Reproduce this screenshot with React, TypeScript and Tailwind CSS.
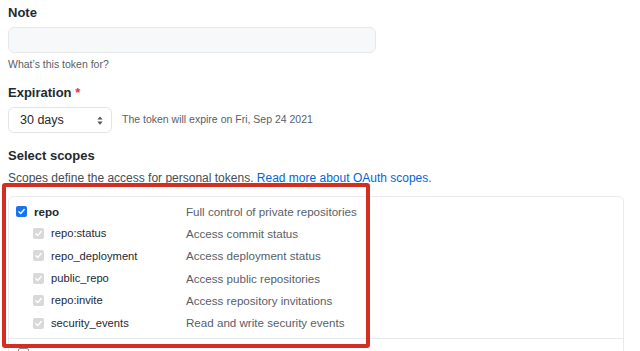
const scopes = [
  { name: "repo:status", desc: "Access commit status" },
  { name: "repo_deployment", desc: "Access deployment status" },
  { name: "public_repo", desc: "Access public repositories" },
  { name: "repo:invite", desc: "Access repository invitations" },
  { name: "security_events", desc: "Read and write security events" },
];

function Check({ disabled }: { disabled?: boolean }) {
  return (
    <span
      className={
        disabled
          ? "flex h-[11px] w-[11px] items-center justify-center rounded-[2px] bg-[#d9d9d9]"
          : "flex h-[11px] w-[11px] items-center justify-center rounded-[2px] bg-[#1a73e8]"
      }
    >
      <svg viewBox="0 0 12 12" className="h-[9px] w-[9px]" fill="none">
        <path d="M2.5 6.2 5 8.6 9.6 3.4" stroke="white" strokeWidth="1.8" strokeLinecap="round" strokeLinejoin="round" />
      </svg>
    </span>
  );
}

export default function App() {
  return (
    <div className="relative h-[351px] w-[640px] overflow-hidden bg-white px-2 pt-[5px] font-['Liberation_Sans',Arial,sans-serif] text-[#24292f]">
      <div className="h-4 text-[13px] font-bold leading-4">Note</div>
      <div className="mt-[6px] h-[26px] w-[368px] rounded-md border border-[#e6e8eb] bg-[#f6f8fa]" />
      <div className="mt-[3px] h-4 text-[10.5px] leading-4 text-[#586069]">What’s this token for?</div>

      <div className="mt-[13px] h-4 text-[13px] font-bold leading-4">
        Expiration <span className="text-[#d73a49]">*</span>
      </div>
      <div className="mt-[6px] flex h-[26px] items-center">
        <div className="flex h-[26px] w-[104px] items-center justify-between rounded-md border border-[#e1e4e8] bg-white pl-[11px] pr-[8px] text-[12.5px]">
          <span>30 days</span>
          <svg viewBox="0 0 8 12" className="h-[9px] w-[6px]" fill="#555">
            <path d="M4 0.5 7.5 4.8H0.5Z" />
            <path d="M4 11.5 7.5 7.2H0.5Z" />
          </svg>
        </div>
        <span className="ml-[10px] text-[10.5px] text-[#586069]">The token will expire on Fri, Sep 24 2021</span>
      </div>

      <div className="mt-[15px] h-4 text-[13px] font-bold leading-4">Select scopes</div>
      <div className="mt-[6px] h-4 text-[12px] leading-4 text-[#444d56]">
        Scopes define the access for personal tokens.{" "}
        <span className="text-[#0366d6]">Read more about OAuth scopes.</span>
      </div>

      <div className="mt-[10px] w-[616px] rounded-md border border-[#e8eaed]">
        <div className="border-b border-[#e8eaed] pb-[3.5px] pt-[3px]">
          <div className="flex h-[22.4px] items-center text-[11.6px]">
            <span className="ml-[7px]">
              <Check />
            </span>
            <span className="ml-[7px] w-[152px] font-bold">repo</span>
            <span className="text-[#586069]">Full control of private repositories</span>
          </div>
          {scopes.map((s) => (
            <div key={s.name} className="flex h-[22.4px] items-center text-[11.6px]">
              <span className="ml-[24px]">
                <Check disabled />
              </span>
              <span className="ml-[7px] w-[135px] text-[11.2px]">{s.name}</span>
              <span className="text-[#586069]">{s.desc}</span>
            </div>
          ))}
        </div>
        <div className="flex h-[22px] items-start pt-[9px]">
          <span className="ml-[9px] h-[11px] w-[11px] rounded-[2px] border border-[#888]" />
        </div>
      </div>

      <div className="pointer-events-none absolute left-[2px] top-[183px] h-[165px] w-[368px] rounded-[3px] border-[4px] border-[#d42e23]" />
    </div>
  );
}
